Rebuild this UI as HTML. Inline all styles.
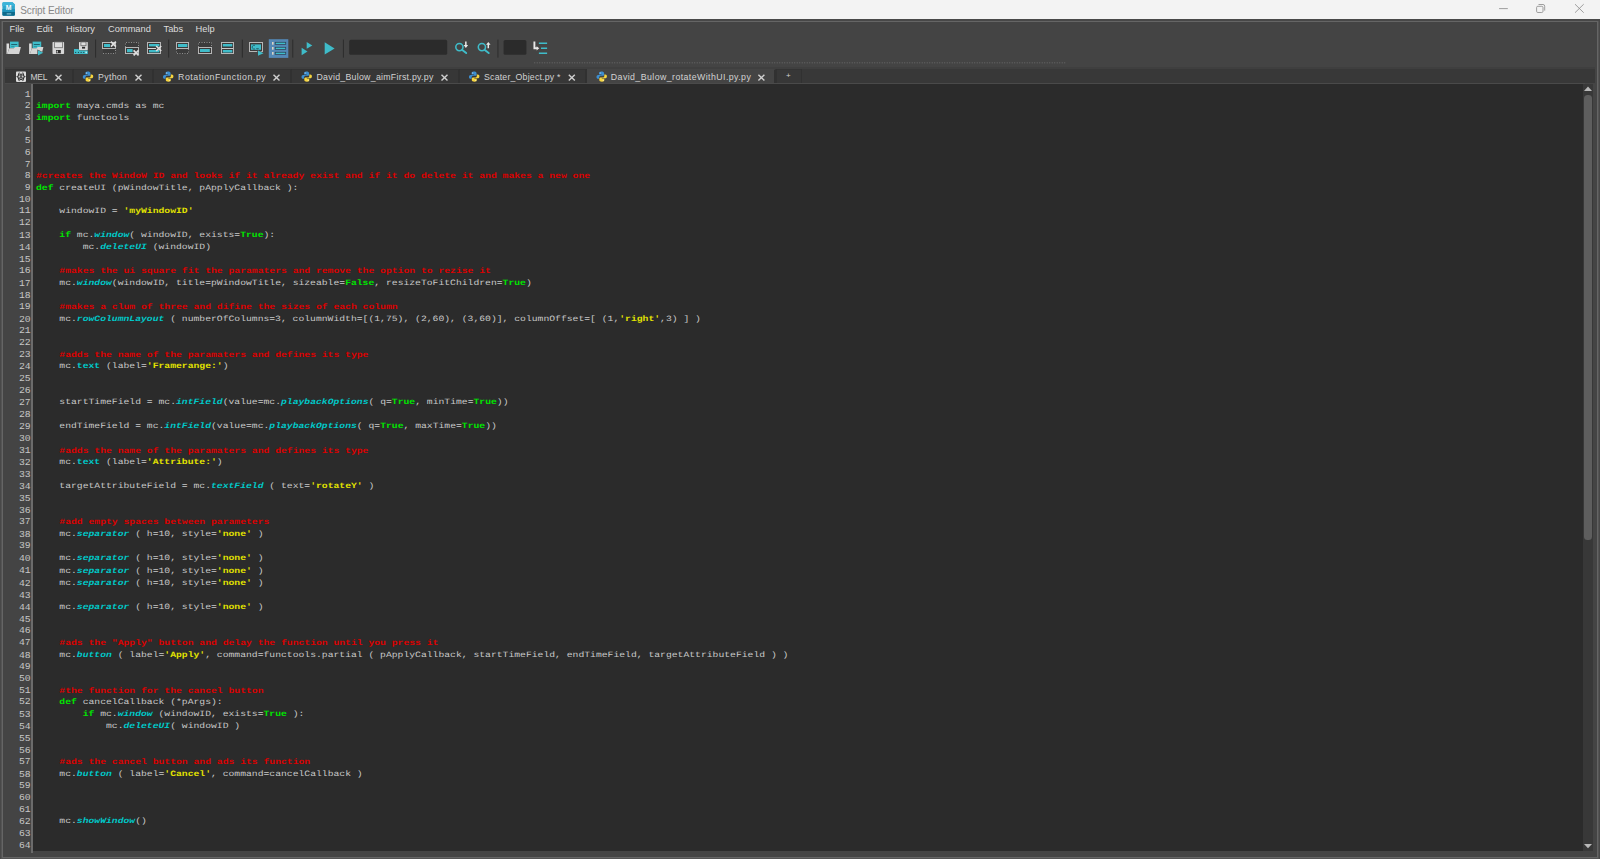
<!DOCTYPE html>
<html lang="en">
<head>
<meta charset="utf-8">
<title>Script Editor</title>
<style>
*{box-sizing:border-box;margin:0;padding:0}
html,body{width:1600px;height:859px;overflow:hidden;background:#444444}
body{position:relative;font-family:"Liberation Sans",sans-serif;color:#d6d6d6}
.abs{position:absolute}
#titlebar{left:0;top:0;width:1600px;height:19px;background:#f3f3f3}
#title{left:20.2px;top:5.2px;font-size:10px;line-height:12px;color:#888888;white-space:nowrap;letter-spacing:-0.08px}
#frame-dark{left:0;top:19px;width:1600px;height:840px;background:#484848}
#frame-light0{left:1px;top:21px;width:1598px;height:838px;background:#545454}
#frame-light{left:2px;top:21px;width:1596px;height:837px;background:#656565}
#frame-in{left:3px;top:22px;width:1594px;height:835px;background:#444444}
.menu{top:22.9px;font-size:9.3px;line-height:12px;color:#dcdcdc;white-space:nowrap}
#tabbar{left:5px;top:69px;width:1590px;height:14px;background:#383838}
#tabshadow{left:5px;top:67px;width:1590px;height:2px;background:#3f3f3f}
#tabline{left:5px;top:83px;width:1580px;height:1px;background:#4a4a4a}
.tab{top:69px;height:14px;background:#373737;border-right:2px solid #313131;border-top:1px solid #333333}
.tab.act{background:#444444;border-top-color:#444444}
.tl{top:70.7px;font-size:8.8px;line-height:12px;color:#d2d2d2;white-space:nowrap}
#gutter{left:5px;top:84px;width:26px;height:768px;background:#444444}
#gsep{left:31px;top:84px;width:2px;height:768.5px;background:#6b6b6b}
#editor{left:33px;top:84px;width:1550px;height:767.4px;background:#2b2b2b}
#sbtrack{left:1583px;top:84px;width:10.4px;height:767.4px;background:#383838}
#sbthumb{left:1584.1px;top:95px;width:8px;height:444.7px;background:#5e5e5e;border-radius:3.5px}
.ln,.cl{position:absolute;text-rendering:geometricPrecision;transform:scaleY(0.83);transform-origin:0 8.6px;font-family:"Liberation Mono",monospace;font-size:9.722px;line-height:12px;height:12px;white-space:pre;color:#c8c8c8}
.ln{left:5px;width:25.6px;text-align:right;transform:scaleY(0.94)}
.cl{left:36.0px}
.k{color:#00e400;font-weight:bold}
.c{color:#dc0000;font-weight:bold}
.s{color:#e2e200;font-weight:bold}
.f{color:#00c8c8;font-weight:bold;font-style:italic}
.t{color:#00c8c8;font-weight:bold}
</style>
</head>
<body>
<div class="abs" id="titlebar"></div>
<svg class="abs" style="left:0;top:0" width="1600" height="19" viewBox="0 0 1600 19">
<path d="M3.6 2.2 H12.5 L14.9 4.6 V14.5 Q14.9 15.7 13.7 15.7 H3.6 Q2.4 15.7 2.4 14.5 V3.4 Q2.4 2.2 3.6 2.2 Z" fill="#2ea5cb"/>
<path d="M3.6 2.2 H12.5 L14.9 4.6 V6 H2.4 V3.4 Q2.4 2.2 3.6 2.2 Z" fill="#3bb3d8"/>
<rect x="2.4" y="9" width="12.5" height="3.2" fill="#2094bb"/>
<path d="M2.4 12.1 H14.9 V14.5 Q14.9 15.7 13.7 15.7 H3.6 Q2.4 15.7 2.4 14.5 Z" fill="#0e6a8b"/>
<rect x="6.7" y="13.3" width="4.5" height="1.2" fill="#7fbdd0"/>
<text x="8.7" y="9.7" font-family="Liberation Sans, sans-serif" font-weight="bold" font-size="6.9" fill="#f4fbfd" text-anchor="middle">M</text>
<g stroke="#8f8f8f" stroke-width="0.85" fill="none">
<path d="M1499.1 8.6 H1507.8"/>
<rect x="1536.6" y="6.3" width="6.4" height="6.2" rx="1.2"/>
<path d="M1538.5 4.5 H1543 Q1544.7 4.5 1544.7 6.2 V10.6"/>
<path d="M1575 4.2 L1583.7 12.7 M1583.7 4.2 L1575 12.7"/>
</g>
</svg>
<div class="abs" id="title">Script Editor</div>
<div class="abs" id="frame-dark"></div>
<div class="abs" id="frame-light0"></div>
<div class="abs" id="frame-light"></div>
<div class="abs" id="frame-in"></div>

<div class="abs menu" style="left:9.5px">File</div>
<div class="abs menu" style="left:36.5px">Edit</div>
<div class="abs menu" style="left:66px">History</div>
<div class="abs menu" style="left:108px">Command</div>
<div class="abs menu" style="left:163.5px">Tabs</div>
<div class="abs menu" style="left:195.5px">Help</div>

<!--TB0-->
<svg class="abs" style="left:0;top:36px" width="1100" height="30" viewBox="0 36 1100 30">
<defs>
<g id="fold">
<polygon points="6.5,43.4 9.1,43.4 9.1,48.6 7.4,54.1 6.5,54.1" fill="#dcdcdc"/>
<rect x="10" y="41.6" width="8.6" height="6.6" fill="#3fbcc9"/>
<rect x="11.2" y="44.1" width="6" height="0.9" fill="#1d5a66"/>
<rect x="11.2" y="46.2" width="3.2" height="0.7" fill="#2b8792"/>
</g>
<g id="x6"><path d="M0.6 0.6 L5.6 5.6 M5.6 0.6 L0.6 5.6" stroke="#dedede" stroke-width="1.7" fill="none"/></g>
</defs>
<!-- 1 open -->
<use href="#fold"/>
<polygon points="9.3,48.3 13.9,48.3 15.2,46.9 20.9,46.9 19.1,54.1 7.3,54.1" fill="#d4d4d4"/>
<!-- 2 source -->
<use href="#fold" x="22.6"/>
<polygon points="31.9,48.3 36.5,48.3 37.8,46.9 43.4,46.9 41.7,54.1 29.9,54.1" fill="#d4d4d4"/>
<polygon points="37.4,49.4 44,52.8 37.4,56.2" fill="#444"/>
<polygon points="38,50.2 43.3,52.8 38,55.5" fill="#3fbcc9"/>
<!-- 3 save -->
<rect x="52.5" y="41.9" width="11.6" height="12.2" rx="0.8" fill="#d8d8d8"/>
<rect x="54.6" y="42" width="7.8" height="5.7" fill="#dedede" stroke="#707070" stroke-width="0.8"/>
<rect x="56" y="50" width="4.8" height="3.3" fill="#2c2c2c"/>
<rect x="56.6" y="50.7" width="1.3" height="1.9" fill="#cfcfcf"/>
<!-- 4 save to shelf -->
<rect x="79" y="42" width="8.8" height="8.2" rx="0.6" fill="#d8d8d8"/>
<rect x="80.9" y="42" width="5.1" height="3.7" fill="#dedede" stroke="#6a6a6a" stroke-width="0.8"/>
<rect x="82" y="46.8" width="3.1" height="1.8" fill="#2c2c2c"/>
<polygon points="74,49.1 78.4,49.1 79.5,50.5 87.8,50.5 87.8,54.1 74,54.1" fill="#3fbcc9"/>
<g fill="#1d4a55"><rect x="75.1" y="51.9" width="1.1" height="1.1"/><rect x="77.9" y="51.9" width="1.1" height="1.1"/><rect x="80.6" y="51.9" width="1.1" height="1.1"/><rect x="83.2" y="51.9" width="1.1" height="1.1"/></g>
<rect x="85.4" y="51.6" width="1.6" height="1.6" fill="#bfe9ee"/>
<!-- separators -->
<g fill="#2e2e2e">
<rect x="95" y="39.6" width="1.1" height="18"/>
<rect x="168.1" y="39.6" width="1.1" height="18"/>
<rect x="241.8" y="39.6" width="1.1" height="18"/>
<rect x="292.2" y="39.6" width="1.1" height="18"/>
<rect x="342.9" y="39.6" width="1.1" height="18"/>
<rect x="497.4" y="39.6" width="1.1" height="18"/>
</g>
<!-- 5 clear history -->
<rect x="103" y="49" width="13" height="4.5" fill="#3b3b3b"/>
<path d="M103 53.5 H115.5 V49" stroke="#8e8e8e" stroke-width="1" stroke-dasharray="1 1.5" fill="none"/>
<rect x="102.5" y="42.5" width="13" height="6" fill="#3a3a3a" stroke="#b6b6b6" stroke-width="1"/>
<rect x="104" y="44" width="6" height="3" fill="#3fbcc9"/>
<use href="#x6" x="110.3" y="41"/>
<!-- 6 clear input -->
<rect x="125" y="42.5" width="13.5" height="5" fill="#3b3b3b"/>
<path d="M125.5 47 V42.5 H138.5 V47" stroke="#8e8e8e" stroke-width="1" stroke-dasharray="1 1.5" fill="none"/>
<rect x="125.5" y="47.5" width="13" height="6" fill="#3a3a3a" stroke="#b6b6b6" stroke-width="1"/>
<rect x="127" y="49" width="5.6" height="3.2" fill="#3fbcc9"/>
<use href="#x6" x="133" y="49.8"/>
<!-- 7 clear all -->
<rect x="147.5" y="42.5" width="13" height="11" fill="#3a3a3a" stroke="#b6b6b6" stroke-width="1"/>
<rect x="148" y="48" width="8" height="1" fill="#d8d8d8"/>
<rect x="149" y="44" width="10.4" height="2.4" fill="#3fbcc9"/>
<rect x="149" y="50" width="10.4" height="2.4" fill="#3fbcc9"/>
<use href="#x6" x="155.6" y="45.4"/>
<!-- 8 show history -->
<rect x="176" y="49" width="13" height="4.6" fill="#3b3b3b"/>
<path d="M176.5 49 V53.5 H188.5 V49" stroke="#8e8e8e" stroke-width="1" stroke-dasharray="1 1.5" fill="none"/>
<rect x="176.5" y="42.5" width="12" height="6" fill="#3a3a3a" stroke="#b6b6b6" stroke-width="1"/>
<rect x="178" y="44" width="9.4" height="3" fill="#3fbcc9"/>
<!-- 9 show input -->
<rect x="198" y="42.5" width="14" height="5" fill="#3b3b3b"/>
<path d="M198.5 47 V42.5 H211.5 V47" stroke="#8e8e8e" stroke-width="1" stroke-dasharray="1 1.5" fill="none"/>
<rect x="198.5" y="47.5" width="13" height="6" fill="#3a3a3a" stroke="#b6b6b6" stroke-width="1"/>
<rect x="200" y="49" width="9.8" height="3" fill="#3fbcc9"/>
<!-- 10 show both -->
<rect x="221.5" y="42.5" width="12" height="11" fill="#3a3a3a" stroke="#b6b6b6" stroke-width="1"/>
<rect x="222" y="48" width="11" height="1" fill="#c8c8c8"/>
<rect x="222.8" y="44" width="9.5" height="2.5" fill="#3fbcc9"/>
<rect x="222.8" y="50" width="9.5" height="2.5" fill="#3fbcc9"/>
<!-- 11 echo all -->
<rect x="249.5" y="42.5" width="13" height="9" fill="#3a3a3a" stroke="#b6b6b6" stroke-width="1"/>
<rect x="251" y="44.4" width="10" height="5.4" fill="#3fbcc9"/>
<path d="M255 45.5 A1.9 1.9 0 1 0 255 48.8" stroke="#21545e" stroke-width="0.8" fill="none"/>
<rect x="256.2" y="48" width="2.6" height="0.7" fill="#21545e"/>
<polygon points="257.2,49.6 264.4,53.2 257.2,56.6" fill="#444"/>
<polygon points="258,50.6 263.5,53.2 258,55.8" fill="#3fbcc9"/>
<!-- 12 line numbers (active) -->
<rect x="268.8" y="39.2" width="19.5" height="18.7" fill="#5488b6"/>
<g fill="#2d4357"><rect x="274.9" y="41.9" width="11.2" height="2.8"/><rect x="274.9" y="46.9" width="11.2" height="2.8"/><rect x="274.9" y="51.9" width="11.2" height="2.8"/></g>
<g fill="#41ccd6"><rect x="275.7" y="42.7" width="9.6" height="1.2"/><rect x="275.7" y="47.7" width="9.6" height="1.2"/><rect x="275.7" y="52.7" width="9.6" height="1.2"/></g>
<g fill="#d9d2c4"><rect x="272" y="42" width="1.6" height="2.7"/><rect x="272" y="47" width="1.6" height="2.7"/><rect x="272" y="52" width="1.6" height="2.7"/></g>
<!-- 13 execute all -->
<polygon points="306.7,42 312.3,45.4 306.7,48.8" fill="#3fbcc9"/>
<polygon points="301.6,47.8 307.5,51.5 301.6,55.3" fill="#3fbcc9"/>
<!-- 14 execute -->
<polygon points="324.7,42.2 334.6,48.4 324.7,54.6" fill="#3fbcc9"/>
<!-- search field -->
<rect x="349.2" y="39.8" width="98" height="15" rx="1.6" fill="#2b2b2b"/>
<!-- 15 search down -->
<circle cx="459.4" cy="47.1" r="3.6" fill="none" stroke="#3fbcc9" stroke-width="1.55"/>
<path d="M462.3 50 L466.2 53.1" stroke="#3fbcc9" stroke-width="1.9" stroke-linecap="round"/>
<path d="M465.1 41.5 H466.6 V45 H468.1 L465.85 47.9 L463.6 45 H465.1 Z" fill="#e8e8e8"/>
<!-- 16 search up -->
<circle cx="481.9" cy="47.1" r="3.6" fill="none" stroke="#3fbcc9" stroke-width="1.55"/>
<path d="M484.8 50 L488.7 53.1" stroke="#3fbcc9" stroke-width="1.9" stroke-linecap="round"/>
<path d="M487.55 48.3 H489.05 V44.8 H490.55 L488.3 41.9 L486.05 44.8 H487.55 Z" fill="#e8e8e8"/>
<!-- goto field -->
<rect x="503.6" y="40" width="22.8" height="14.8" rx="1.6" fill="#2b2b2b"/>
<!-- 17 goto line -->
<path d="M534.4 41.6 V48.3 H537" stroke="#e8e8e8" stroke-width="1.9" fill="none"/>
<polygon points="536.6,46.2 539.3,48.3 536.6,50.4" fill="#e8e8e8"/>
<g fill="#3fbcc9"><rect x="538.9" y="42.5" width="8.2" height="1.5"/><rect x="541" y="47.5" width="6.1" height="1.5"/><rect x="538.9" y="52.5" width="8.2" height="1.5"/></g>
<!-- dotted handle -->
<path d="M534.2 62.7 H1066" stroke="#5e5e5e" stroke-width="1.5" stroke-dasharray="1 1.5" fill="none"/>
</svg>
<!--TB1-->

<div class="abs" id="tabshadow"></div>
<div class="abs" id="tabbar"></div>
<div class="abs tab" style="left:5.0px;width:68.5px"></div>
<div class="abs tab" style="left:73.5px;width:80.0px"></div>
<div class="abs tab" style="left:153.5px;width:138.5px"></div>
<div class="abs tab" style="left:292.0px;width:167.5px"></div>
<div class="abs tab" style="left:459.5px;width:127.5px"></div>
<div class="abs tab act" style="left:587.0px;width:189.0px"></div>
<div class="abs tab" style="left:776.0px;width:26.5px;border-left:1px solid #313131;border-right-width:1px;width:25.5px"></div>
<div class="abs" id="tabline"></div>
<div class="abs tl" style="left:30.4px;letter-spacing:-0.15px;font-size:8.5px;top:70.5px">MEL</div>
<div class="abs tl" style="left:98px;letter-spacing:0.311px">Python</div>
<div class="abs tl" style="left:178px;letter-spacing:0.527px">RotationFunction.py</div>
<div class="abs tl" style="left:316.5px;letter-spacing:0.262px">David_Bulow_aimFirst.py.py</div>
<div class="abs tl" style="left:484px;letter-spacing:0.181px">Scater_Object.py *</div>
<div class="abs tl" style="left:610.8px;letter-spacing:0.417px">David_Bulow_rotateWithUI.py.py</div>
<div class="abs tl" style="left:786px;font-size:8px;top:69.8px">+</div>
<svg class="abs" style="left:0;top:66px" width="1600" height="20" viewBox="0 66 1600 20">
<defs><path id="pyh" d="M4.9 0 C3 0 2.6 0.8 2.6 1.7 V3 H5.1 V3.5 H1.7 C0.6 3.5 0 4.3 0 5.4 C0 6.5 0.6 7.2 1.6 7.2 H2.6 V5.9 C2.6 5 3.4 4.3 4.3 4.3 H6.4 C7.1 4.3 7.6 3.7 7.6 3 V1.7 C7.6 0.7 6.6 0 4.9 0 Z"/><g id="py"><use href="#pyh" fill="#3d8fd1"/><use href="#pyh" transform="rotate(180 5.2 5.15)" fill="#f6d53f"/><circle cx="3.7" cy="1.5" r="0.5" fill="#dfeefa"/><circle cx="6.7" cy="8.8" r="0.5" fill="#fff8d8"/></g>
<g id="tx"><path d="M0.5 0.5 L6.5 6.3 M6.5 0.5 L0.5 6.3" stroke="#cfcfcf" stroke-width="1.45" fill="none"/></g></defs>
<rect x="16" y="71.6" width="10" height="10.3" rx="0.8" fill="#dcdcdc"/>
<path d="M19.6 72.9 C18.3 72.9 18.9 76.2 17.5 76.75 C18.9 77.3 18.3 80.6 19.6 80.6 M22.4 72.9 C23.7 72.9 23.1 76.2 24.5 76.75 C23.1 77.3 23.7 80.6 22.4 80.6" stroke="#2e2e2e" stroke-width="1.15" fill="none"/>
<ellipse cx="21" cy="75.1" rx="1.1" ry="1.2" fill="none" stroke="#2e2e2e" stroke-width="1.05"/><ellipse cx="21" cy="78.3" rx="1.25" ry="1.35" fill="none" stroke="#2e2e2e" stroke-width="1.05"/>
<use href="#py" x="82.8" y="71.5"/>
<use href="#py" x="163.0" y="71.5"/>
<use href="#py" x="301.5" y="71.5"/>
<use href="#py" x="469.0" y="71.5"/>
<use href="#py" x="596.5" y="71.5"/>
<use href="#tx" x="55.0" y="74.2"/>
<use href="#tx" x="135.0" y="74.2"/>
<use href="#tx" x="273.0" y="74.2"/>
<use href="#tx" x="441.0" y="74.2"/>
<use href="#tx" x="568.3" y="74.2"/>
<use href="#tx" x="757.9" y="74.2"/>
</svg>

<div class="abs" id="gutter"></div>
<div class="abs" id="gsep"></div>
<div class="abs" id="editor"></div>
<div class="abs" id="sbtrack"></div>
<div class="abs" id="sbthumb"></div>
<svg class="abs" style="left:1580px;top:84px" width="16" height="768" viewBox="1580 84 16 768">
<polygon points="1584,91.1 1588,86.5 1592,91.1" fill="#b9b9b9"/>
<polygon points="1584,843.9 1592,843.9 1588,848.3" fill="#b9b9b9"/>
</svg>

<div id="nums">
<div class="ln" style="top:89px">1</div>
<div class="ln" style="top:100px">2</div>
<div class="ln" style="top:112px">3</div>
<div class="ln" style="top:124px">4</div>
<div class="ln" style="top:135px">5</div>
<div class="ln" style="top:147px">6</div>
<div class="ln" style="top:159px">7</div>
<div class="ln" style="top:170px">8</div>
<div class="ln" style="top:182px">9</div>
<div class="ln" style="top:194px">10</div>
<div class="ln" style="top:205px">11</div>
<div class="ln" style="top:217px">12</div>
<div class="ln" style="top:230px">13</div>
<div class="ln" style="top:242px">14</div>
<div class="ln" style="top:254px">15</div>
<div class="ln" style="top:265px">16</div>
<div class="ln" style="top:278px">17</div>
<div class="ln" style="top:290px">18</div>
<div class="ln" style="top:301px">19</div>
<div class="ln" style="top:314px">20</div>
<div class="ln" style="top:325px">21</div>
<div class="ln" style="top:337px">22</div>
<div class="ln" style="top:349px">23</div>
<div class="ln" style="top:361px">24</div>
<div class="ln" style="top:373px">25</div>
<div class="ln" style="top:385px">26</div>
<div class="ln" style="top:397px">27</div>
<div class="ln" style="top:409px">28</div>
<div class="ln" style="top:421px">29</div>
<div class="ln" style="top:433px">30</div>
<div class="ln" style="top:445px">31</div>
<div class="ln" style="top:457px">32</div>
<div class="ln" style="top:469px">33</div>
<div class="ln" style="top:481px">34</div>
<div class="ln" style="top:493px">35</div>
<div class="ln" style="top:505px">36</div>
<div class="ln" style="top:516px">37</div>
<div class="ln" style="top:529px">38</div>
<div class="ln" style="top:540px">39</div>
<div class="ln" style="top:553px">40</div>
<div class="ln" style="top:565px">41</div>
<div class="ln" style="top:578px">42</div>
<div class="ln" style="top:590px">43</div>
<div class="ln" style="top:602px">44</div>
<div class="ln" style="top:614px">45</div>
<div class="ln" style="top:625px">46</div>
<div class="ln" style="top:637px">47</div>
<div class="ln" style="top:650px">48</div>
<div class="ln" style="top:661px">49</div>
<div class="ln" style="top:673px">50</div>
<div class="ln" style="top:685px">51</div>
<div class="ln" style="top:696px">52</div>
<div class="ln" style="top:709px">53</div>
<div class="ln" style="top:721px">54</div>
<div class="ln" style="top:733px">55</div>
<div class="ln" style="top:745px">56</div>
<div class="ln" style="top:756px">57</div>
<div class="ln" style="top:769px">58</div>
<div class="ln" style="top:780px">59</div>
<div class="ln" style="top:792px">60</div>
<div class="ln" style="top:804px">61</div>
<div class="ln" style="top:816px">62</div>
<div class="ln" style="top:828px">63</div>
<div class="ln" style="top:840px">64</div>
</div>
<div id="code">
<div class="cl" style="top:100px"><span class="k">import</span> maya.cmds as mc</div>
<div class="cl" style="top:112px"><span class="k">import</span> functools</div>
<div class="cl" style="top:170px"><span class="c">#creates the WindoW ID and looks if it already exist and if it do delete it and makes a new one</span></div>
<div class="cl" style="top:182px"><span class="k">def</span> createUI (pWindowTitle, pApplyCallback ):</div>
<div class="cl" style="top:205px">    windowID = <span class="s">'myWindowID'</span></div>
<div class="cl" style="top:229px">    <span class="k">if</span> mc.<span class="f">window</span>( windowID, exists=<span class="k">True</span>):</div>
<div class="cl" style="top:241px">        mc.<span class="f">deleteUI</span> (windowID)</div>
<div class="cl" style="top:265px">    <span class="c">#makes the ui square fit the paramaters and remove the option to rezise it</span></div>
<div class="cl" style="top:277px">    mc.<span class="f">window</span>(windowID, title=pWindowTitle, sizeable=<span class="k">False</span>, resizeToFitChildren=<span class="k">True</span>)</div>
<div class="cl" style="top:301px">    <span class="c">#makes a clum of three and difine the sizes of each column</span></div>
<div class="cl" style="top:313px">    mc.<span class="f">rowColumnLayout</span> ( numberOfColumns=3, columnWidth=[(1,75), (2,60), (3,60)], columnOffset=[ (1,<span class="s">'right'</span>,3) ] )</div>
<div class="cl" style="top:349px">    <span class="c">#adds the name of the paramaters and defines its type</span></div>
<div class="cl" style="top:360px">    mc.<span class="t">text</span> (label=<span class="s">'Framerange:'</span>)</div>
<div class="cl" style="top:396px">    startTimeField = mc.<span class="f">intField</span>(value=mc.<span class="f">playbackOptions</span>( q=<span class="k">True</span>, minTime=<span class="k">True</span>))</div>
<div class="cl" style="top:420px">    endTimeField = mc.<span class="f">intField</span>(value=mc.<span class="f">playbackOptions</span>( q=<span class="k">True</span>, maxTime=<span class="k">True</span>))</div>
<div class="cl" style="top:445px">    <span class="c">#adds the name of the paramaters and defines its type</span></div>
<div class="cl" style="top:456px">    mc.<span class="t">text</span> (label=<span class="s">'Attribute:'</span>)</div>
<div class="cl" style="top:480px">    targetAttributeField = mc.<span class="f">textField</span> ( text=<span class="s">'rotateY'</span> )</div>
<div class="cl" style="top:516px">    <span class="c">#add empty spaces between parameters</span></div>
<div class="cl" style="top:528px">    mc.<span class="f">separator</span> ( h=10, style=<span class="s">'none'</span> )</div>
<div class="cl" style="top:552px">    mc.<span class="f">separator</span> ( h=10, style=<span class="s">'none'</span> )</div>
<div class="cl" style="top:565px">    mc.<span class="f">separator</span> ( h=10, style=<span class="s">'none'</span> )</div>
<div class="cl" style="top:577px">    mc.<span class="f">separator</span> ( h=10, style=<span class="s">'none'</span> )</div>
<div class="cl" style="top:601px">    mc.<span class="f">separator</span> ( h=10, style=<span class="s">'none'</span> )</div>
<div class="cl" style="top:637px">    <span class="c">#ads the "Apply" button and delay the function until you press it</span></div>
<div class="cl" style="top:649px">    mc.<span class="f">button</span> ( label=<span class="s">'Apply'</span>, command=functools.partial ( pApplyCallback, startTimeField, endTimeField, targetAttributeField ) )</div>
<div class="cl" style="top:685px">    <span class="c">#the function for the cancel button</span></div>
<div class="cl" style="top:696px">    <span class="k">def</span> cancelCallback (*pArgs):</div>
<div class="cl" style="top:708px">        <span class="k">if</span> mc.<span class="f">window</span> (windowID, exists=<span class="k">True</span> ):</div>
<div class="cl" style="top:720px">            mc.<span class="f">deleteUI</span>( windowID )</div>
<div class="cl" style="top:756px">    <span class="c">#ads the cancel button and ads its function</span></div>
<div class="cl" style="top:768px">    mc.<span class="f">button</span> ( label=<span class="s">'Cancel'</span>, command=cancelCallback )</div>
<div class="cl" style="top:815px">    mc.<span class="f">showWindow</span>()</div>
</div>
</body>
</html>
